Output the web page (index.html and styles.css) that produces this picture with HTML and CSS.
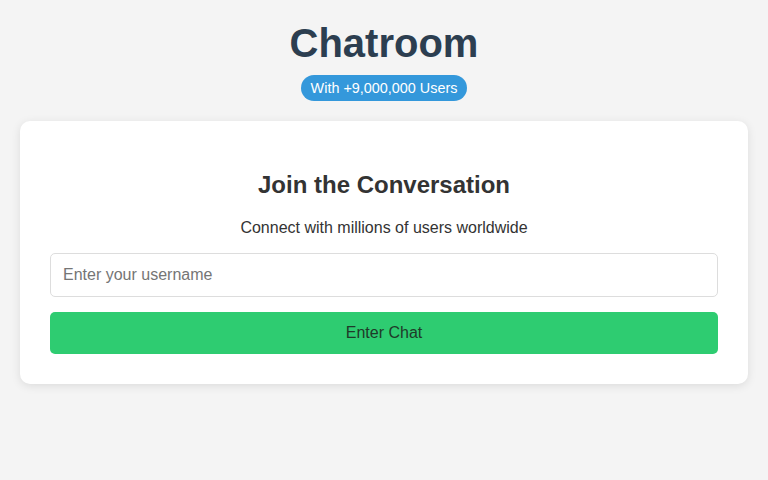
FILE: index.html
```html
<!DOCTYPE html>
<html lang="en">
<head>
<meta charset="utf-8">
<title>Chatroom</title>
<link rel="stylesheet" href="styles.css">
</head>
<body>
  <header class="header">
    <h1 class="title">Chatroom</h1>
    <span class="badge">With +9,000,000 Users</span>
  </header>
  <main class="card">
    <h2 class="card-title">Join the Conversation</h2>
    <p class="card-sub">Connect with millions of users worldwide</p>
    <input class="username" type="text" placeholder="Enter your username">
    <button class="enter-btn" type="button">Enter Chat</button>
  </main>
</body>
</html>
```

FILE: styles.css
```css
* { box-sizing: border-box; }
html, body { margin: 0; }
body {
  background: #f4f4f4;
  font-family: "Liberation Sans", Arial, sans-serif;
  color: #333;
  padding: 20px;
}
.header {
  display: flex;
  flex-direction: column;
  align-items: center;
}
.title {
  margin: 0 0 9px;
  font-size: 40px;
  font-weight: bold;
  color: #2c3e50;
  line-height: 46px;
}
.badge {
  display: inline-block;
  background: #3498db;
  color: #fff;
  font-size: 14.4px;
  line-height: 16px;
  padding: 5px 10px;
  border-radius: 13px;
}
.card {
  display: block;
  margin-top: 20px;
  background: #fff;
  border-radius: 10px;
  box-shadow: 0 2px 10px rgba(0,0,0,0.1);
  padding: 30px;
  text-align: center;
}
.card-title {
  margin: 20px 0 20px;
  font-size: 24px;
  line-height: 28px;
  font-weight: bold;
  color: #333;
}
.card-sub {
  margin: 0 0 16px;
  font-size: 16px;
  line-height: 18px;
  color: #333;
}
.username {
  display: block;
  width: 100%;
  padding: 12px;
  font-size: 16px;
  line-height: 18px;
  height: 44px;
  font-family: inherit;
  border: 1px solid #ddd;
  border-radius: 5px;
  margin: 0 0 15px;
  color: #333;
  outline: none;
}
.username::placeholder { color: #757575; }
.enter-btn {
  display: block;
  width: 100%;
  padding: 12px;
  height: 42px;
  font-size: 16px;
  line-height: 18px;
  font-family: inherit;
  background: #2ecc71;
  color: #1f3a29;
  border: none;
  border-radius: 5px;
}
```
